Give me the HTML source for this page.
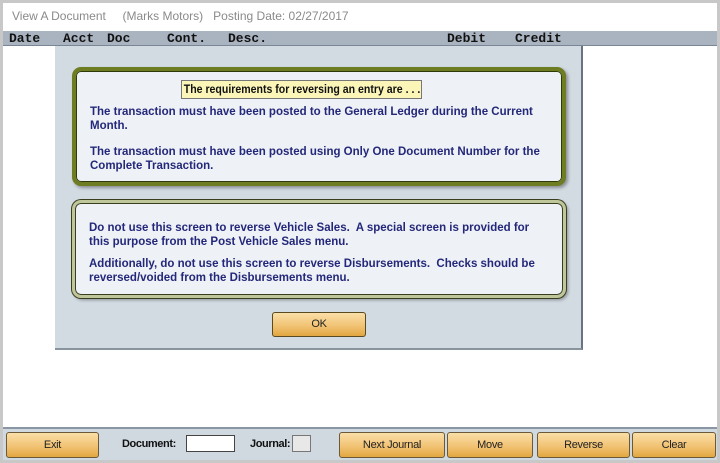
<!DOCTYPE html>
<html><head><style>
*{margin:0;padding:0;box-sizing:border-box}
body{width:720px;height:463px;background:#c8c8c8;position:relative;overflow:hidden;font-family:"Liberation Sans",sans-serif}
.win{position:absolute;left:3px;top:3px;width:714px;height:457px;background:#fff}
.title{position:absolute;left:9px;top:6px;font-size:12px;color:#8a8a8a;white-space:pre}
.hdr{position:absolute;left:0;top:28px;width:714px;height:15px;background:#aab4c0;border-bottom:1px solid #7a8696;font-family:"Liberation Mono",monospace;font-weight:bold;font-size:13px;color:#111;line-height:15px}
.hdr span{position:absolute;top:0}
.dlg{position:absolute;left:52px;top:43px;width:528px;height:304px;background:#d2dae2;border-right:2px solid #6a7480;border-bottom:2px solid #8a949e}
.box{position:absolute;left:17px;width:494px;border-radius:9px;background:#eef1f5;color:#24287a;font-weight:bold;font-size:11.5px;line-height:14px;box-shadow:2px 2px 3px rgba(0,0,0,.35)}
.b1{top:21px;height:119px;border:4px solid #6e7c22;box-shadow:inset 0 0 0 1px #2e3a08,2px 2px 3px rgba(0,0,0,.35)}
.b2{top:154px;height:98px;border:3px solid #bfc69a;box-shadow:inset 0 0 0 1px #3a3e20,0 0 0 1px #3a3e20,2px 2px 3px rgba(0,0,0,.35)}
.tag{position:absolute;left:105px;top:9px;width:241px;height:19px;background:#fbf6b8;border:1px solid #777;color:#111;font-size:12px;line-height:17px;white-space:nowrap;overflow:hidden}
.tag span{position:absolute;left:50%;top:0;transform:translateX(-50%) scaleX(0.88)}
.txt{position:absolute;left:14px;width:462px}
.btn{position:absolute;background:linear-gradient(#fbdfa8,#f0c070 60%,#e2a640);border:1px solid #6a5a3a;border-radius:3px;font-size:11px;color:#222;text-align:center;letter-spacing:-0.3px}
.bar{position:absolute;left:0;top:424px;width:714px;height:33px;background:#d0d8e0;border-top:2px solid #8a96a4}
.lbl{position:absolute;top:9px;font-size:11px;font-weight:bold;color:#111;letter-spacing:-0.4px}
</style></head><body>
<div class="win">
<div class="title">View A Document     (Marks Motors)   Posting Date: 02/27/2017</div>
<div class="hdr"><span style="left:6px">Date</span><span style="left:60px">Acct</span><span style="left:104px">Doc</span><span style="left:164px">Cont.</span><span style="left:225px">Desc.</span><span style="left:444px">Debit</span><span style="left:512px">Credit</span></div>
<div class="dlg">
 <div class="box b1">
  <div class="tag"><span>The requirements for reversing an entry are . . .</span></div>
  <div class="txt" style="top:34px">The transaction must have been posted to the General Ledger during the Current Month.</div>
  <div class="txt" style="top:74px">The transaction must have been posted using Only One Document Number for the Complete Transaction.</div>
 </div>
 <div class="box b2">
  <div class="txt" style="top:18px">Do not use this screen to reverse Vehicle Sales.&nbsp; A special screen is provided for this purpose from the Post Vehicle Sales menu.</div>
  <div class="txt" style="top:54px">Additionally, do not use this screen to reverse Disbursements.&nbsp; Checks should be reversed/voided from the Disbursements menu.</div>
 </div>
 <div class="btn" style="left:217px;top:266px;width:94px;height:25px;line-height:23px;border-color:#5a4a20">OK</div>
</div>
<div class="bar">
 <div class="btn" style="left:3px;top:3px;width:93px;height:26px;line-height:24px">Exit</div>
 <div class="lbl" style="left:119px">Document:</div>
 <div style="position:absolute;left:183px;top:6px;width:49px;height:17px;background:#fff;border:1px solid #444"></div>
 <div class="lbl" style="left:247px">Journal:</div>
 <div style="position:absolute;left:289px;top:6px;width:19px;height:17px;background:#e8e8e8;border:1px solid #777"></div>
 <div class="btn" style="left:336px;top:3px;width:106px;height:26px;line-height:24px">Next Journal</div>
 <div class="btn" style="left:444px;top:3px;width:86px;height:26px;line-height:24px">Move</div>
 <div class="btn" style="left:534px;top:3px;width:93px;height:26px;line-height:24px">Reverse</div>
 <div class="btn" style="left:629px;top:3px;width:84px;height:26px;line-height:24px">Clear</div>
</div>
</div>
</body></html>
